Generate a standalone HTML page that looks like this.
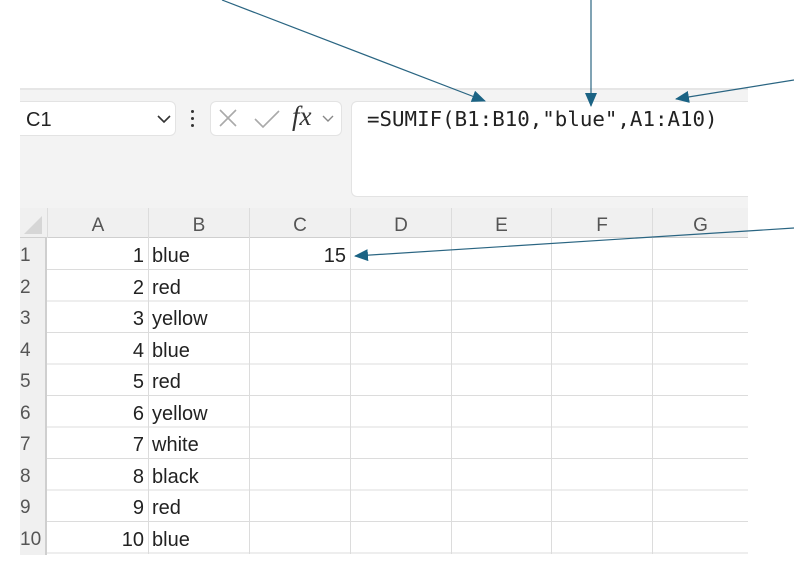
<!DOCTYPE html>
<html><head><style>
*{margin:0;padding:0;box-sizing:border-box}
body{width:794px;height:567px;background:#fff;position:relative;overflow:hidden;font-family:"Liberation Sans",sans-serif;color:#222}
.abs{position:absolute}
.band{left:20px;top:88px;width:728px;height:120px;background:#f3f3f3;border-top:2px solid #e6e6e6}
.box{background:#fff;border:1px solid #e3e3e3;border-radius:6px}
.hdr{left:20px;top:208px;width:728px;height:30px;background:#f0f0f0;border-bottom:1px solid #cfcfcf}
.ch{top:208px;height:30px;font-size:19px;color:#555;text-align:center;line-height:36px;border-left:1px solid #dcdcdc}
.rh{left:20px;width:27px;height:31.5px;background:#f0f0f0;font-size:19px;color:#555;line-height:36px;border-right:2px solid #cfcfcf}
.cell{font-size:20px;line-height:36px;height:31.5px}
</style></head><body>
<div class="abs band"></div>
<div class="abs box" style="left:20px;top:101px;width:156px;height:35px;border-left:none;border-radius:0 6px 6px 0"></div>
<div class="abs" style="left:26px;top:109px;font-size:20px">C1</div>
<svg class="abs" style="left:156px;top:113px" width="16" height="12"><path d="M2 3 L8 9 L14 3" stroke="#333" stroke-width="1.6" fill="none"/></svg>
<div class="abs" style="left:191px;top:110px;width:4px;height:18px">
<div style="width:3px;height:3px;background:#333;border-radius:50%;margin-bottom:4px"></div><div style="width:3px;height:3px;background:#333;border-radius:50%;margin-bottom:4px"></div><div style="width:3px;height:3px;background:#333;border-radius:50%"></div></div>
<div class="abs box" style="left:210px;top:101px;width:132px;height:35px"></div>
<svg class="abs" style="left:210px;top:101px" width="132" height="35">
<path d="M10 9 L26 25 M26 9 L10 25" stroke="#aaa" stroke-width="1.6"/>
<path d="M45 18 L53 26 L69 10" stroke="#aaa" stroke-width="1.6" fill="none"/>
<path d="M113 15 L118 20 L123 15" stroke="#888" stroke-width="1.4" fill="none"/>
</svg>
<div class="abs" style="left:292px;top:101px;font-family:'Liberation Serif',serif;font-style:italic;font-size:27px;color:#333">fx</div>
<div class="abs box" style="left:351px;top:101px;width:397px;height:96px;border-right:none;border-radius:6px 0 0 6px"></div>
<div class="abs" style="left:367px;top:107px;font-family:'DejaVu Sans Mono','Liberation Mono',monospace;font-size:20.8px;color:#222">=SUMIF(B1:B10,"blue",A1:A10)</div>

<div class="abs hdr"></div>
<svg class="abs" style="left:20px;top:208px" width="27" height="30"><path d="M22 8 L22 26 L4 26 Z" fill="#d6d6d6"/></svg>
<div class="abs ch" style="left:47px;width:101px">A</div>
<div class="abs ch" style="left:148px;width:101px">B</div>
<div class="abs ch" style="left:249px;width:101px">C</div>
<div class="abs ch" style="left:350px;width:101px">D</div>
<div class="abs ch" style="left:451px;width:100px">E</div>
<div class="abs ch" style="left:551px;width:101px">F</div>
<div class="abs ch" style="left:652px;width:96px">G</div>

<svg class="abs" style="left:20px;top:238px" width="728" height="320">
<g stroke="#dcdcdc" stroke-width="1">
<line x1="128.5" y1="0" x2="128.5" y2="316"/><line x1="229.5" y1="0" x2="229.5" y2="316"/><line x1="330.5" y1="0" x2="330.5" y2="316"/><line x1="431.5" y1="0" x2="431.5" y2="316"/><line x1="531.5" y1="0" x2="531.5" y2="316"/><line x1="632.5" y1="0" x2="632.5" y2="316"/>
<line x1="0" y1="31.5" x2="728" y2="31.5"/><line x1="0" y1="63" x2="728" y2="63"/><line x1="0" y1="94.5" x2="728" y2="94.5"/><line x1="0" y1="126" x2="728" y2="126"/><line x1="0" y1="157.5" x2="728" y2="157.5"/><line x1="0" y1="189" x2="728" y2="189"/><line x1="0" y1="220.5" x2="728" y2="220.5"/><line x1="0" y1="252" x2="728" y2="252"/><line x1="0" y1="283.5" x2="728" y2="283.5"/><line x1="0" y1="315" x2="728" y2="315"/>
</g></svg>

<div class="abs rh" style="top:238px">1</div><div class="abs rh" style="top:269.5px">2</div><div class="abs rh" style="top:301px">3</div><div class="abs rh" style="top:332.5px">4</div><div class="abs rh" style="top:364px">5</div><div class="abs rh" style="top:395.5px">6</div><div class="abs rh" style="top:427px">7</div><div class="abs rh" style="top:458.5px">8</div><div class="abs rh" style="top:490px">9</div><div class="abs rh" style="top:521.5px;height:33px">10</div>

<div class="abs" style="left:47px;top:238px;width:97px;text-align:right">
<div class="cell">1</div><div class="cell">2</div><div class="cell">3</div><div class="cell">4</div><div class="cell">5</div><div class="cell">6</div><div class="cell">7</div><div class="cell">8</div><div class="cell">9</div><div class="cell">10</div></div>
<div class="abs" style="left:152px;top:238px">
<div class="cell">blue</div><div class="cell">red</div><div class="cell">yellow</div><div class="cell">blue</div><div class="cell">red</div><div class="cell">yellow</div><div class="cell">white</div><div class="cell">black</div><div class="cell">red</div><div class="cell">blue</div></div>
<div class="abs cell" style="left:249px;top:238px;width:97px;text-align:right">15</div>

<svg class="abs" style="left:0;top:0" width="794" height="567">
<defs><marker id="b" markerWidth="14" markerHeight="12" refX="13" refY="6" orient="auto" markerUnits="userSpaceOnUse"><path d="M0 0 L14 6 L0 12 Z" fill="#1b6384"/></marker></defs>
<g stroke="#2a6582" stroke-width="1.2" fill="none">
<line x1="222" y1="0" x2="485" y2="101" marker-end="url(#b)"/>
<line x1="591" y1="0" x2="591" y2="106" marker-end="url(#b)"/>
<line x1="794" y1="80" x2="676" y2="99" marker-end="url(#b)"/>
<line x1="794" y1="228" x2="355" y2="256" marker-end="url(#b)"/>
</g></svg>
</body></html>
